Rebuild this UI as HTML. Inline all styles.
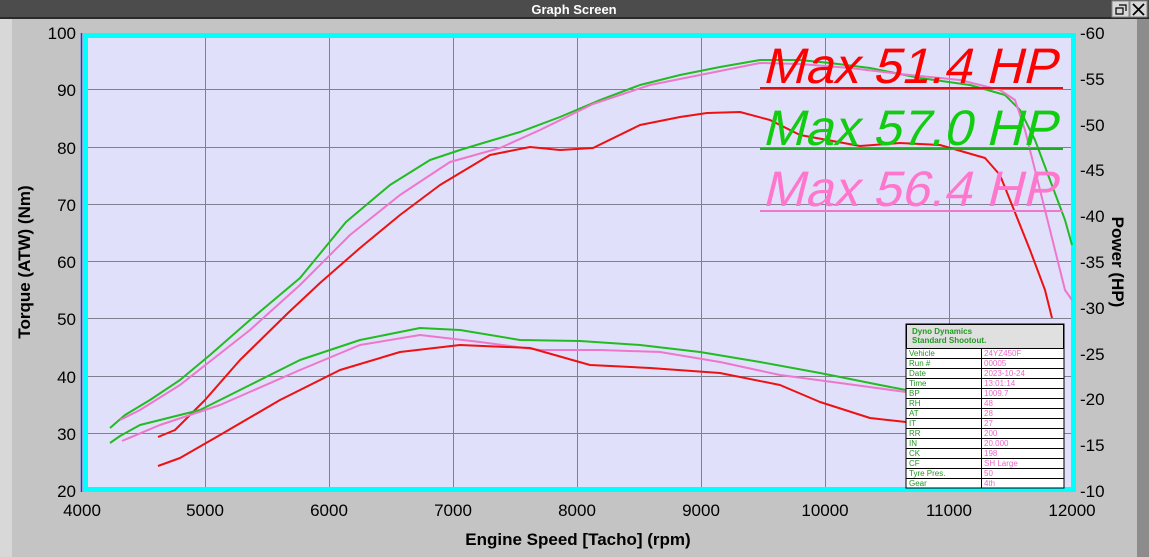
<!DOCTYPE html>
<html><head><style>
html,body{margin:0;padding:0;width:1149px;height:557px;overflow:hidden;background:#c4c4c4;font-family:"Liberation Sans",sans-serif}
</style></head><body>
<svg width="1149" height="557" viewBox="0 0 1149 557" xmlns="http://www.w3.org/2000/svg" font-family="Liberation Sans, sans-serif">
<rect x="0" y="0" width="1149" height="557" fill="#c4c4c4"/>
<rect x="0" y="19" width="12" height="538" fill="#d8d8d8"/>
<rect x="1137" y="19" width="12" height="538" fill="#8c8c8c"/>
<rect x="0" y="0" width="1149" height="18" fill="#4c4c4c"/>
<rect x="0" y="17" width="1149" height="2" fill="#2a2a2a"/>
<text x="574" y="14" fill="#fff" font-size="13" font-weight="bold" text-anchor="middle">Graph Screen</text>
<rect x="1112" y="1" width="17" height="16" fill="#d8d8d8" stroke="#888"/>
<rect x="1130" y="1" width="17" height="16" fill="#d8d8d8" stroke="#888"/>
<path d="M1116 8h7v6h-7z M1119 5h7v6" fill="none" stroke="#000" stroke-width="1.2"/>
<path d="M1133 4l11 11M1144 4l-11 11" stroke="#000" stroke-width="1.8"/>
<rect x="83" y="33" width="993" height="459" fill="#00ffff"/>
<rect x="88" y="38" width="983" height="449" fill="#e0e0fa"/>
<line x1="81.5" y1="33" x2="81.5" y2="492" stroke="#0040ff" stroke-width="1.5"/>
<g stroke="#808090" stroke-width="1">
<line x1="205.5" y1="38" x2="205.5" y2="487"/><line x1="329.5" y1="38" x2="329.5" y2="487"/><line x1="453.5" y1="38" x2="453.5" y2="487"/><line x1="577.5" y1="38" x2="577.5" y2="487"/><line x1="701.5" y1="38" x2="701.5" y2="487"/><line x1="825.5" y1="38" x2="825.5" y2="487"/><line x1="949.5" y1="38" x2="949.5" y2="487"/>
<line x1="88" y1="89.5" x2="1071" y2="89.5"/><line x1="88" y1="147.5" x2="1071" y2="147.5"/><line x1="88" y1="204.5" x2="1071" y2="204.5"/><line x1="88" y1="261.5" x2="1071" y2="261.5"/><line x1="88" y1="318.5" x2="1071" y2="318.5"/><line x1="88" y1="376.5" x2="1071" y2="376.5"/><line x1="88" y1="433.5" x2="1071" y2="433.5"/>
</g>
<g fill="none" stroke-width="2" stroke-linejoin="round">
<polyline stroke="#22bb22" points="110,428 125,415 150,400 180,380 210,355 250,320 300,278 346,222 390,185 430,160 460,150 483,143 520,132 560,117 600,100 640,85 680,75 720,67 760,60 800,60 830,63 870,68 920,78 970,85 1005,95 1020,110 1035,140 1050,180 1065,220 1072,245"/>
<polyline stroke="#ee77cc" points="120,420 140,410 180,385 250,330 300,285 350,235 400,195 450,162 500,148 540,130 593,104 650,85 700,75 760,63 800,64 850,68 900,74 960,80 1000,90 1015,100 1025,130 1040,190 1055,250 1065,290 1072,300"/>
<polyline stroke="#ee1111" points="158,437 175,430 205,400 240,360 288,313 320,283 360,248 400,215 440,185 490,155 530,147 560,150 593,148 640,125 680,117 707,113 740,112 770,120 800,135 860,146 900,143 940,145 985,158 1000,175 1012,205 1030,250 1045,290 1052,318"/>
<polyline stroke="#22bb22" points="110,443 120,436 140,425 200,410 250,385 300,360 360,340 420,328 460,330 520,340 580,341 640,345 700,352 760,362 820,373 880,385 906,390"/>
<polyline stroke="#ee77cc" points="122,441 160,425 220,405 300,370 360,345 420,335 480,342 540,350 600,350 660,352 720,362 780,375 840,383 906,392"/>
<polyline stroke="#ee1111" points="158,466 180,458 220,435 280,400 340,370 400,352 460,345 530,348 590,365 650,368 720,373 780,385 820,402 870,418 906,422"/>
</g>
<g font-size="50">
<text transform="translate(762,83) skewX(-14)" fill="#ff0000" textLength="294" lengthAdjust="spacingAndGlyphs">Max 51.4 HP</text>
<text transform="translate(762,145) skewX(-14)" fill="#11cc11" textLength="294" lengthAdjust="spacingAndGlyphs">Max 57.0 HP</text>
<text transform="translate(762,206) skewX(-14)" fill="#ff77cc" textLength="294" lengthAdjust="spacingAndGlyphs">Max 56.4 HP</text>
</g>
<line x1="760" y1="88" x2="1063" y2="88" stroke="#dd1111" stroke-width="2"/>
<line x1="760" y1="149" x2="1063" y2="149" stroke="#22aa22" stroke-width="2"/>
<line x1="760" y1="211" x2="1063" y2="211" stroke="#ee77cc" stroke-width="2"/>
<g font-size="8">
<rect x="906" y="324" width="158" height="164" fill="#fff" stroke="#000"/>
<rect x="906.5" y="324.5" width="157" height="24" fill="#e0e0e0" stroke="#000"/>
<text x="912" y="334" fill="#229922" font-weight="bold">Dyno Dynamics</text>
<text x="912" y="343" fill="#229922" font-weight="bold">Standard Shootout.</text>
<line x1="981.5" y1="348" x2="981.5" y2="488" stroke="#000"/>
<g stroke="#000"><line x1="906" y1="358.5" x2="1064" y2="358.5"/><line x1="906" y1="368.5" x2="1064" y2="368.5"/><line x1="906" y1="378.5" x2="1064" y2="378.5"/><line x1="906" y1="388.5" x2="1064" y2="388.5"/><line x1="906" y1="398.5" x2="1064" y2="398.5"/><line x1="906" y1="408.5" x2="1064" y2="408.5"/><line x1="906" y1="418.5" x2="1064" y2="418.5"/><line x1="906" y1="428.5" x2="1064" y2="428.5"/><line x1="906" y1="438.5" x2="1064" y2="438.5"/><line x1="906" y1="448.5" x2="1064" y2="448.5"/><line x1="906" y1="458.5" x2="1064" y2="458.5"/><line x1="906" y1="468.5" x2="1064" y2="468.5"/><line x1="906" y1="478.5" x2="1064" y2="478.5"/></g>
<g fill="#229922"><text x="909" y="356">Vehicle</text><text x="909" y="366">Run #</text><text x="909" y="376">Date</text><text x="909" y="386">Time</text><text x="909" y="396">BP</text><text x="909" y="406">RH</text><text x="909" y="416">AT</text><text x="909" y="426">IT</text><text x="909" y="436">RR</text><text x="909" y="446">IN</text><text x="909" y="456">CK</text><text x="909" y="466">CF</text><text x="909" y="476">Tyre Pres.</text><text x="909" y="486">Gear</text></g>
<g fill="#ee66cc"><text x="984" y="356">24YZ450F</text><text x="984" y="366">00005</text><text x="984" y="376">2023-10-24</text><text x="984" y="386">13:01:14</text><text x="984" y="396">1009.7</text><text x="984" y="406">48</text><text x="984" y="416">28</text><text x="984" y="426">27</text><text x="984" y="436">200</text><text x="984" y="446">20.000</text><text x="984" y="456">198</text><text x="984" y="466">SH Large</text><text x="984" y="476">50</text><text x="984" y="486">4th</text></g>
</g>
<g font-size="17" fill="#000" text-anchor="end">
<text x="76" y="39">100</text><text x="76" y="96">90</text><text x="76" y="154">80</text><text x="76" y="211">70</text><text x="76" y="268">60</text><text x="76" y="325">50</text><text x="76" y="383">40</text><text x="76" y="440">30</text><text x="76" y="497">20</text>
</g>
<g font-size="17" fill="#000">
<text x="1080" y="39">-60</text><text x="1080" y="85">-55</text><text x="1080" y="131">-50</text><text x="1080" y="176">-45</text><text x="1080" y="222">-40</text><text x="1080" y="268">-35</text><text x="1080" y="314">-30</text><text x="1080" y="360">-25</text><text x="1080" y="405">-20</text><text x="1080" y="451">-15</text><text x="1080" y="497">-10</text>
</g>
<g font-size="17" fill="#000" text-anchor="middle">
<text x="82" y="516">4000</text><text x="205" y="516">5000</text><text x="329" y="516">6000</text><text x="453" y="516">7000</text><text x="577" y="516">8000</text><text x="701" y="516">9000</text><text x="825" y="516">10000</text><text x="949" y="516">11000</text><text x="1072" y="516">12000</text>
</g>
<text x="578" y="545" font-size="17" font-weight="bold" text-anchor="middle">Engine Speed [Tacho] (rpm)</text>
<text transform="translate(30,262) rotate(-90)" font-size="17" font-weight="bold" text-anchor="middle">Torque (ATW) (Nm)</text>
<text transform="translate(1112,262) rotate(90)" font-size="17" font-weight="bold" text-anchor="middle">Power (HP)</text>
</svg>
</body></html>
